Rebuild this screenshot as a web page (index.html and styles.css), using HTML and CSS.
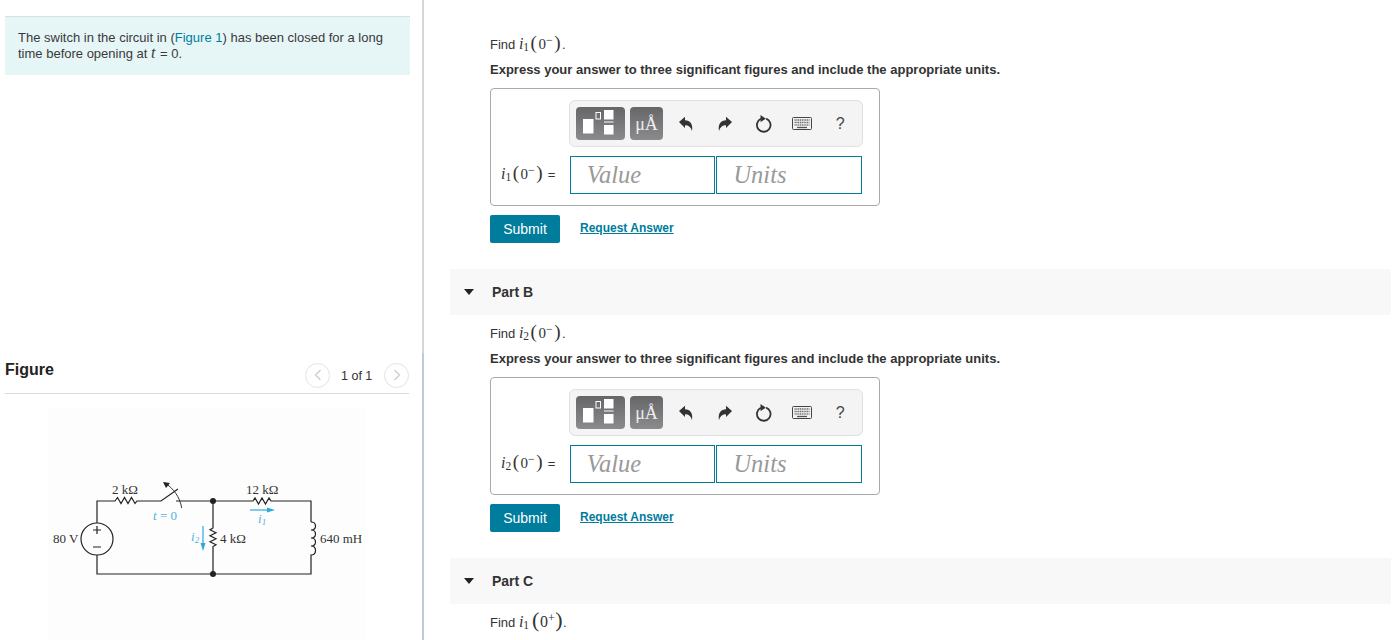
FILE: index.html
```html
<!DOCTYPE html>
<html lang="en">
<head>
<meta charset="utf-8">
<title>Circuit problem</title>
<link rel="stylesheet" href="styles.css">
</head>
<body>
<svg class="sprites" width="0" height="0" aria-hidden="true">
  <defs>
    <symbol id="i-templates" viewBox="0 0 49 33">
      <rect x="7" y="12" width="10.500" height="14.500" fill="#fff"/>
      <rect x="20" y="5.500" width="4.500" height="6.500" fill="none" stroke="#fff" stroke-width="1"/>
      <rect x="28" y="3" width="9.500" height="9.500" fill="#fff"/>
      <rect x="28" y="14.500" width="9.500" height="1" fill="#fff"/>
      <rect x="28" y="18" width="9.500" height="9.500" fill="#fff"/>
    </symbol>
    <symbol id="i-undo" viewBox="0 0 16 16">
      <path d="M1 6 7 .8V4.200C12 4.400 15.200 7.800 14 15 13 11.200 10.800 9.200 7 9.200V12Z" fill="#333"/>
    </symbol>
    <symbol id="i-redo" viewBox="0 0 16 16">
      <path d="M15 6 9 .8V4.200C4 4.400 .8 7.800 2 15 3 11.200 5.200 9.200 9 9.200V12Z" fill="#333"/>
    </symbol>
    <symbol id="i-reset" viewBox="0 0 18 18">
      <path d="M6.800 3.800A6.800 6.800 0 1 0 12.200 3.600" fill="none" stroke="#333" stroke-width="1.800"/>
      <path d="M6.500 0 11.900 3.800 6.500 7Z" fill="#333"/>
    </symbol>
    <symbol id="i-keys" viewBox="0 0 20 13">
      <rect x=".5" y=".5" width="19" height="12" rx="1" fill="#f4f4f4" stroke="#444"/>
      <path d="M2.500 3h15M2.500 5.500h15" stroke="#666" stroke-width="1.300" stroke-dasharray="1.200 .6"/>
      <path d="M2.500 8h15" stroke="#777" stroke-width="1.300" stroke-dasharray="1.200 .6"/>
      <path d="M5 10.500h10" stroke="#555" stroke-width="1.300"/>
    </symbol>
  </defs>
</svg>

<main class="layout">
  <aside class="left">
    <section class="intro-pane">
      <div class="intro">The switch in the circuit in (<a class="link" href="#fig">Figure 1</a>) has been closed for a long time before opening at <i class="var">t</i> = 0.</div>
    </section>
    <section class="figure-pane" id="fig">
      <header class="figure-head">
        <h2 class="figure-title">Figure</h2>
        <div class="pager">
          <span class="page-btn"><svg width="8" height="12" viewBox="0 0 8 12"><path d="M6.500 1 1.500 6l5 5" fill="none" stroke="#ccc" stroke-width="1.200"/></svg></span>
          <span class="page-text">1 of 1</span>
          <span class="page-btn"><svg width="8" height="12" viewBox="0 0 8 12"><path d="M1.500 1l5 5-5 5" fill="none" stroke="#ccc" stroke-width="1.200"/></svg></span>
        </div>
      </header>
      <svg class="circuit" width="317" height="232" viewBox="48 408 317 232">
        <rect x="48" y="408" width="317" height="232" fill="#fdfdfd"/>
        <g class="wire">
          <path d="M97 523V501H115l2.500-3.500 3.500 6 3.500-6 3.500 6 3.500-6 3.500 6 2 -2.500H161L178 489"/>
          <path d="M176 501H253l2-3 3.500 6 3.500-6 3.500 6 3.500-6 2 3H311V522"/>
          <path d="M311 522c6 0 6 8 0 8c6 0 6 8 0 8c6 0 6 8 0 8c6 0 6 9 0 9V574H97V555"/>
          <path d="M213 501V528l-3 1.800 6 3-6 3 6 3-6 3 6 3-3 1.700V574"/>
          <circle cx="97" cy="539" r="16"/>
          <path d="M93 530h8M97 526v8M93 547h8"/>
          <path class="thin" d="M181.700 508C180 497 173 488 165 483"/>
        </g>
        <path d="M163 482 170 483 166 488Z" fill="#222"/>
        <circle cx="213" cy="501" r="3" fill="#222"/>
        <circle cx="213" cy="574" r="3" fill="#222"/>
        <g class="arrow">
          <path d="M250 510H270"/>
          <path d="M203 526V544"/>
        </g>
        <path d="M275 510 267 507.500V512.500Z" fill="#2fa8dc"/>
        <path d="M203 551 200.500 543H205.500Z" fill="#2fa8dc"/>
        <text class="lbl" x="112" y="494">2 kΩ</text>
        <text class="lbl" x="246" y="494">12 kΩ</text>
        <text class="lbl" x="220" y="543">4 kΩ</text>
        <text class="lbl" x="53" y="543">80 V</text>
        <text class="lbl" x="320" y="543">640 mH</text>
        <text class="lbl blue" x="153" y="520"><tspan class="it">t</tspan> = 0</text>
        <text class="lbl blue it" x="258" y="523">i<tspan class="sub" dy="2">1</tspan></text>
        <text class="lbl blue it" x="191" y="541">i<tspan class="sub" dy="2">2</tspan></text>
      </svg>
    </section>
  </aside>

  <div class="right">
    <section class="part part-first">
      <div class="part-body">
        <p class="find">Find <span class="math"><i>i</i><sub>1</sub><span class="paren">(</span>0<sup>−</sup><span class="paren">)</span></span>.</p>
        <p class="express">Express your answer to three significant figures and include the appropriate units.</p>
        <div class="answer">
          <div class="toolbar">
            <span class="tool tool-wide"><svg width="49" height="33"><use href="#i-templates"/></svg></span>
            <span class="tool tool-units">μÅ</span>
            <span class="tool-plain"><svg width="16" height="16"><use href="#i-undo"/></svg></span>
            <span class="tool-plain"><svg width="16" height="16"><use href="#i-redo"/></svg></span>
            <span class="tool-plain"><svg width="18" height="18"><use href="#i-reset"/></svg></span>
            <span class="tool-plain"><svg width="20" height="13"><use href="#i-keys"/></svg></span>
            <span class="tool-plain help">?</span>
          </div>
          <div class="entry">
            <span class="entry-label"><span class="math"><i>i</i><sub>1</sub><span class="paren">(</span>0<sup>−</sup><span class="paren">)</span></span> =</span>
            <span class="field">Value</span>
            <span class="field">Units</span>
          </div>
        </div>
        <div class="actions">
          <button class="submit" type="button">Submit</button>
          <a class="request" href="#a">Request Answer</a>
        </div>
      </div>
    </section>

    <section class="part">
      <h3 class="part-bar"><span class="caret"></span>Part B</h3>
      <div class="part-body">
        <p class="find">Find <span class="math"><i>i</i><sub>2</sub><span class="paren">(</span>0<sup>−</sup><span class="paren">)</span></span>.</p>
        <p class="express">Express your answer to three significant figures and include the appropriate units.</p>
        <div class="answer">
          <div class="toolbar">
            <span class="tool tool-wide"><svg width="49" height="33"><use href="#i-templates"/></svg></span>
            <span class="tool tool-units">μÅ</span>
            <span class="tool-plain"><svg width="16" height="16"><use href="#i-undo"/></svg></span>
            <span class="tool-plain"><svg width="16" height="16"><use href="#i-redo"/></svg></span>
            <span class="tool-plain"><svg width="18" height="18"><use href="#i-reset"/></svg></span>
            <span class="tool-plain"><svg width="20" height="13"><use href="#i-keys"/></svg></span>
            <span class="tool-plain help">?</span>
          </div>
          <div class="entry">
            <span class="entry-label"><span class="math"><i>i</i><sub>2</sub><span class="paren">(</span>0<sup>−</sup><span class="paren">)</span></span> =</span>
            <span class="field">Value</span>
            <span class="field">Units</span>
          </div>
        </div>
        <div class="actions">
          <button class="submit" type="button">Submit</button>
          <a class="request" href="#a">Request Answer</a>
        </div>
      </div>
    </section>

    <section class="part">
      <h3 class="part-bar"><span class="caret"></span>Part C</h3>
      <div class="part-body">
        <p class="find">Find <span class="math math-big"><i>i</i><sub>1</sub><span class="paren paren-gap">(</span>0<sup>+</sup><span class="paren">)</span></span>.</p>
      </div>
    </section>
  </div>
</main>
</body>
</html>
```

FILE: styles.css
```css
* { box-sizing: border-box; }
html, body { margin: 0; height: 640px; overflow: hidden; background: #fff; }
body { font-family: "Liberation Sans", Arial, sans-serif; font-size: 13px; line-height: 16px; color: #333; }
.sprites { display: block; height: 0; }
.layout { display: flex; height: 640px; }

.left { flex: 0 0 424px; display: flex; flex-direction: column; }
.intro-pane { height: 353px; padding: 16px 12px 0 5px; border-right: 2px solid #d4d6d8; }
.intro { height: 59px; padding: 13px 14px 0 13px; background: #e6f5f6; border-top: 1px solid #d8dfe2; color: #3a3a3a; }
.link { color: #007c9c; text-decoration: none; }
.var { font-family: "Liberation Serif", serif; font-size: 16px; line-height: 0; margin-right: 1px; }

.figure-pane { flex: 1; border-right: 2px solid #b9cbdf; min-height: 0; overflow: hidden; }
.figure-head { display: flex; justify-content: space-between; margin: 0 13px 0 5px; height: 41px; padding-top: 8px; border-bottom: 1px solid #d9dcde; }
.figure-title { margin: 0; font-size: 16px; line-height: 17px; color: #222; }
.pager { display: flex; align-items: center; height: 26px; margin-top: 1px; }
.page-btn { display: flex; align-items: center; justify-content: center; width: 25px; height: 25px; border: 1px solid #e3e3e3; border-radius: 50%; }
.page-text { width: 54px; padding: 2px 0 0 11px; font-size: 12.500px; color: #333; }
.circuit { display: block; margin: 14px 0 0 48px; }
.wire { fill: none; stroke: #222; stroke-width: 1.200; }
.wire .thin { stroke-width: .9; }
.arrow { fill: none; stroke: #2fa8dc; stroke-width: 1.200; }
.lbl { font-family: "Liberation Serif", serif; font-size: 13px; fill: #333; }
.blue { fill: #4fb3dd; }
.it { font-style: italic; }
.sub { font-size: 9px; }

.right { flex: 1; padding: 26px 2px 0 26px; }
.part { margin-bottom: 26px; }
.part-bar { display: flex; align-items: center; height: 46px; margin: 0; padding: 0 0 0 14px; background: #f8f8f8; font-size: 14px; color: #333; }
.caret { width: 0; height: 0; margin-right: 18px; border-left: 5.500px solid transparent; border-right: 5.500px solid transparent; border-top: 6px solid #222; }
.part-body { padding: 9px 0 0 40px; }
p { margin: 0; }
.find { height: 18px; line-height: 18px; }
.express { margin-top: 9px; font-weight: 700; height: 16px; }
.math { font-family: "Liberation Serif", serif; font-size: 15px; color: #333; }
.math i { font-size: 16px; }
.math sub { font-size: 11.500px; line-height: 0; vertical-align: -2px; }
.math sup { font-size: 12px; line-height: 0; vertical-align: 5px; }
.math .paren { font-size: 19px; line-height: 0; margin: 0 1.500px; }
.math-big { font-size: 16px; }
.math-big .paren { font-size: 22px; margin: 0 .5px; }
.math-big .paren-gap { margin-left: 3px; }

.answer { width: 390px; height: 118px; margin-top: 10px; padding: 11px 16px 0 10px; border: 1px solid #aaa; border-radius: 4px; }
.toolbar { display: flex; align-items: center; width: 294px; height: 47px; margin-left: 68px; padding-left: 6px; background: #f4f4f4; border: 1px solid #e0e0e0; border-radius: 6px; }
.tool { display: flex; align-items: center; justify-content: center; height: 33px; border-radius: 4px; background: linear-gradient(#666669, #8b8b8e); }
.tool-wide { width: 49px; margin-right: 5px; }
.tool-units { width: 33px; margin-right: 4px; font-family: "Liberation Serif", serif; font-size: 18px; color: #eee; }
.tool-plain { display: flex; align-items: center; justify-content: center; width: 38.500px; height: 33px; }
.help { font-size: 16px; color: #444; }
.entry { display: flex; align-items: center; margin-top: 8px; height: 39px; }
.entry-label { width: 69px; font-size: 13px; white-space: nowrap; }
.field { width: 146px; height: 38px; margin-right: 1px; padding-left: 16px; border: 1px solid #007c9c; font-family: "Liberation Serif", serif; font-style: italic; font-size: 24.500px; line-height: 35px; color: #999; }
.actions { display: flex; align-items: flex-start; margin-top: 9px; }
.submit { width: 70px; height: 28px; padding: 0; border: 0; border-radius: 2px; background: #007c9c; color: #fff; font: 14px/28px "Liberation Sans", Arial, sans-serif; }
.request { margin: 5px 0 0 20px; font-size: 12px; font-weight: 700; color: #007c9c; }
```
